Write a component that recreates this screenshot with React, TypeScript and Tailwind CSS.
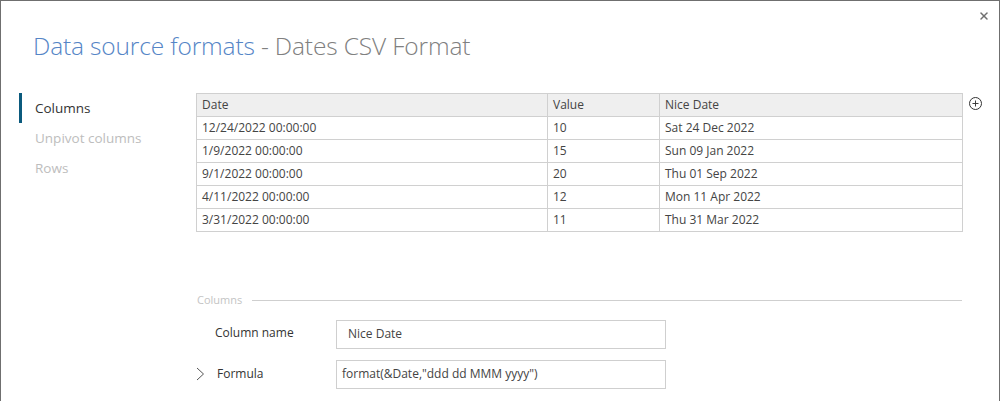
import { Plus, X } from "lucide-react";

const rows = [
  ["12/24/2022 00:00:00", "10", "Sat 24 Dec 2022"],
  ["1/9/2022 00:00:00", "15", "Sun 09 Jan 2022"],
  ["9/1/2022 00:00:00", "20", "Thu 01 Sep 2022"],
  ["4/11/2022 00:00:00", "12", "Mon 11 Apr 2022"],
  ["3/31/2022 00:00:00", "11", "Thu 31 Mar 2022"],
];

export default function App() {
  return (
    <div
      className="w-[1000px] h-[401px] overflow-hidden bg-white border-t border-l border-r border-[#6f6f6f] relative text-[#333]"
      style={{ fontFamily: '"Open Sans", "Noto Sans", sans-serif' }}
    >
      {/* Close */}
      <button className="absolute top-[9px] right-[9px] text-[#707070]">
        <X className="w-[12px] h-[12px]" strokeWidth={3} />
      </button>

      {/* Title */}
      <h1 className="pl-[32px] pt-[28px] h-[92px] text-[24.5px] font-light tracking-[-0.15px] leading-[34px]">
        <span className="text-[#5585c6]">Data source formats</span>
        <span className="text-[#808080]"> - Dates CSV Format</span>
      </h1>

      <div className="flex">
        {/* Side nav */}
        <nav className="w-[195px] pl-[18px] flex flex-col text-[13.5px]">
          <div className="flex items-center h-[30px] border-l-[3px] border-[#0b5a7d] pl-[13px] text-[#333]">
            Columns
          </div>
          <div className="flex items-center h-[30px] pl-[16px] text-[#bdbdbd]">Unpivot columns</div>
          <div className="flex items-center h-[30px] pl-[16px] text-[#bdbdbd]">Rows</div>
        </nav>

        {/* Main */}
        <div className="flex-1 flex flex-col">
          <div className="flex items-start">
            <table className="w-[767px] border-collapse text-[12px] text-[#444] border border-[#d0d0d0]">
              <thead>
                <tr className="bg-[#efefef] h-[23px]">
                  <th className="w-[351px] text-left font-normal pl-[5px] border border-[#d0d0d0]">Date</th>
                  <th className="w-[112px] text-left font-normal pl-[5px] border border-[#d0d0d0]">Value</th>
                  <th className="text-left font-normal pl-[5px] border border-[#d0d0d0]">Nice Date</th>
                </tr>
              </thead>
              <tbody>
                {rows.map((r) => (
                  <tr key={r[0]} className="h-[23px]">
                    {r.map((c, i) => (
                      <td key={i} className="pl-[5px] border border-[#d0d0d0]">
                        {c}
                      </td>
                    ))}
                  </tr>
                ))}
              </tbody>
            </table>
            <div className="ml-[6px] mt-[4px] w-[13px] h-[13px] rounded-full border border-[#333] flex items-center justify-center">
              <Plus className="w-[9px] h-[9px]" strokeWidth={2.5} />
            </div>
          </div>

          {/* Columns section */}
          <div className="mt-[60px] flex items-center w-[766px]">
            <span className="text-[11px] text-[#c4c4c4] pl-[1px]">Columns</span>
            <div className="flex-1 ml-[10px] border-t border-[#cfcfcf]" />
          </div>

          <div className="mt-[11px] flex items-center h-[29px]">
            <span className="w-[140px] pl-[19px] text-[12px] text-[#333] -mt-[2px]">Column name</span>
            <div className="w-[330px] h-[29px] border border-[#cfcfcf] flex items-center pl-[11px] text-[12px] text-[#444]">
              Nice Date
            </div>
          </div>

          <div className="mt-[11px] flex items-center h-[29px]">
            <span className="w-[140px] flex items-center text-[12px] text-[#333]">
              <svg width="9" height="14" viewBox="0 0 9 14" className="mr-[12px]">
                <path d="M1 1 L7.5 7 L1 13" fill="none" stroke="#555" strokeWidth="1" />
              </svg>
              Formula
            </span>
            <div className="w-[330px] h-[29px] border border-[#cfcfcf] flex items-center pl-[5px] text-[12px] text-[#444]">
              format(&amp;Date,"ddd dd MMM yyyy")
            </div>
          </div>
        </div>
      </div>
    </div>
  );
}
